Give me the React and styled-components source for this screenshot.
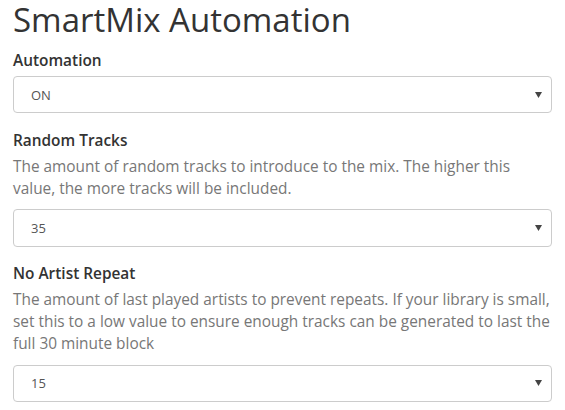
import React from "react";
import styled, { createGlobalStyle } from "styled-components";

const Global = createGlobalStyle`
  html, body { margin: 0; padding: 0; background: #fff; }
  body { font-family: "Open Sans", "Liberation Sans", sans-serif; color: #333; }
`;

const Page = styled.div`
  padding: 0 13px;
  width: 539px;
`;

const Title = styled.h1`
  margin: 0 0 10px;
  font-size: 33px;
  font-weight: 400;
  line-height: 40px;
  color: #333;
`;

const Group = styled.div`
  margin-bottom: 16.5px;
`;

const Label = styled.div`
  font-size: 15.4px;
  font-weight: 600;
  line-height: 22px;
  color: #333;
  margin-bottom: 4px;
`;

const Help = styled.p`
  margin: 0 0 9.5px;
  font-size: 15.4px;
  line-height: 22px;
  color: #777;
`;

const SelectBox = styled.div`
  box-sizing: border-box;
  height: 37.4px;
  border: 1px solid #ccc;
  border-radius: 4px;
  display: flex;
  align-items: center;
  justify-content: space-between;
  padding: 0 9px 0 17px;
  font-size: 13px;
  color: #555;
`;

const Arrow = styled.svg`
  width: 7px;
  height: 6px;
  fill: #444;
`;

const fields = [
  { label: "Automation", value: "ON" },
  {
    label: "Random Tracks",
    help: "The amount of random tracks to introduce to the mix. The higher this value, the more tracks will be included.",
    value: "35",
  },
  {
    label: "No Artist Repeat",
    help: "The amount of last played artists to prevent repeats. If your library is small, set this to a low value to ensure enough tracks can be generated to last the full 30 minute block",
    value: "15",
  },
];

export default function App() {
  return (
    <>
      <Global />
      <Page>
        <Title>SmartMix Automation</Title>
        {fields.map((f) => (
          <Group key={f.label}>
            <Label>{f.label}</Label>
            {f.help && <Help>{f.help}</Help>}
            <SelectBox>
              <span>{f.value}</span>
              <Arrow viewBox="0 0 7 6">
                <path d="M0 0H7L3.5 6Z" />
              </Arrow>
            </SelectBox>
          </Group>
        ))}
      </Page>
    </>
  );
}
